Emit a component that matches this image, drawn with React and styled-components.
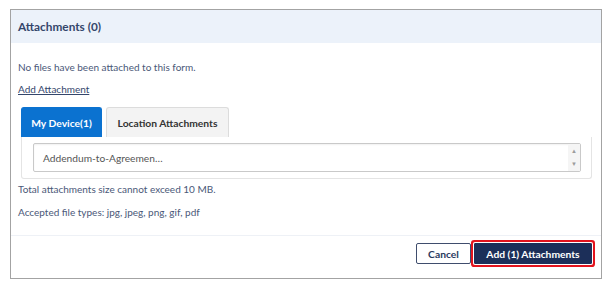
import styled, { createGlobalStyle } from 'styled-components';

const GlobalStyle = createGlobalStyle`
	body {
		margin: 0;
		background: #ffffff;
		font-family: Lato, "Open Sans", sans-serif;
	}
`

const Panel = styled.section`
	box-sizing: border-box;
	width: 592px;
	height: 270px;
	margin: 9px 0 0 10px;
	border: 1px solid #a3a3a3;
	display: flex;
	flex-direction: column;
`

const Header = styled.header`
	height: 33px;
	flex-shrink: 0;
	display: flex;
	align-items: center;
	padding-left: 7px;
	background: #ecf2fa;
	color: #34466b;
	font-size: 11.8px;
	font-weight: 700;
`

const Body = styled.div`
	flex: 1;
	padding: 17px 9px 0 7px;
	display: flex;
	flex-direction: column;
`

const Note = styled.p`
	margin: 0 0 ${p => p.$gap || 9}px;
	height: 14px;
	line-height: 14px;
	font-size: 10px;
	color: #4a5878;
`

const LinkText = styled.a`
	display: block;
	height: 14px;
	line-height: 14px;
	font-size: 10px;
	color: #34466b;
	text-decoration: underline;
	margin-bottom: 11px;
	cursor: pointer;
`

const TabBox = styled.div`
	margin-left: 3px;
	margin-bottom: 3px;
`

const TabList = styled.div`
	display: flex;
	gap: 4px;
	height: 30px;
`

const Tab = styled.button`
	box-sizing: border-box;
	width: ${p => p.$w}px;
	height: 30px;
	border: 1px solid ${p => (p.$active ? '#0b72d0' : '#dcdcdc')};
	border-bottom: none;
	border-radius: 3px 3px 0 0;
	background: ${p => (p.$active ? '#0b72d0' : '#f3f3f3')};
	color: ${p => (p.$active ? '#ffffff' : '#333333')};
	font-family: inherit;
	font-size: 10.3px;
	font-weight: 700;
	padding: 0;
`

const TabPanel = styled.div`
	box-sizing: border-box;
	height: 42px;
	border: 1px solid #e4e4e4;
	border-top: none;
	border-radius: 0 0 3px 3px;
	padding: 6px 10px 0 11px;
`

const FileField = styled.div`
	box-sizing: border-box;
	height: 29px;
	border: 1px solid #c9c9c9;
	border-radius: 2px;
	box-shadow: inset 0 1px 2px rgba(0, 0, 0, 0.06);
	display: flex;
	align-items: center;
	padding-left: 9px;
	font-size: 10.2px;
	color: #555555;
`

const FileName = styled.span`
	flex: 1;
`

const Spinner = styled.div`
	width: 12px;
	height: 100%;
	background: #f5f5f5;
	display: flex;
	flex-direction: column;
	justify-content: space-around;
	align-items: center;
	color: #9c9c9c;
	font-size: 6px;
	line-height: 6px;
`

const Footer = styled.footer`
	height: 35px;
	flex-shrink: 0;
	border-top: 1px solid #eef1f6;
	display: flex;
	justify-content: flex-end;
	align-items: flex-start;
	gap: 3px;
	padding: 7px 9px 0 0;
`

const Button = styled.button`
	box-sizing: border-box;
	height: 21px;
	width: ${p => p.$w}px;
	border-radius: ${p => (p.$focused ? 1 : 2)}px;
	border: 1px solid ${p => (p.$primary ? '#1c2f59' : '#3f4d6d')};
	background: ${p => (p.$primary ? '#1c2f59' : '#ffffff')};
	color: ${p => (p.$primary ? '#ffffff' : '#2a3a5e')};
	font-family: inherit;
	font-size: 10.3px;
	font-weight: 700;
	padding: 0;
	${p => p.$focused && `
		box-shadow: 0 0 0 1px #ffffff, 0 0 0 3px #e3131d;
	`}
`

export default function App() {
	return (
		<>
			<GlobalStyle />
			<Panel>
				<Header>Attachments (0)</Header>
				<Body>
					<Note $gap={8}>No files have been attached to this form.</Note>
					<LinkText>Add Attachment</LinkText>
					<TabBox>
						<TabList>
							<Tab $active $w={81}>My Device(1)</Tab>
							<Tab $w={123}>Location Attachments</Tab>
						</TabList>
						<TabPanel>
							<FileField>
								<FileName>Addendum-to-Agreemen…</FileName>
								<Spinner>
									<span>▲</span>
									<span>▼</span>
								</Spinner>
							</FileField>
						</TabPanel>
					</TabBox>
					<Note>Total attachments size cannot exceed 10 MB.</Note>
					<Note>Accepted file types: jpg, jpeg, png, gif, pdf</Note>
				</Body>
				<Footer>
					<Button $w={55}>Cancel</Button>
					<Button $primary $focused $w={118}>Add (1) Attachments</Button>
				</Footer>
			</Panel>
		</>
	)
}
